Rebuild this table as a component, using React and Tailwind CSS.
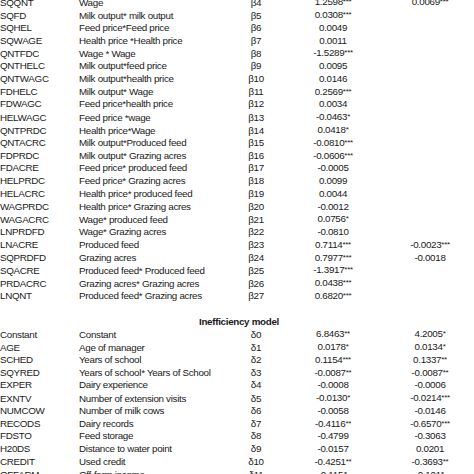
import React from 'react';

const rows = [
  ['SQQNT', 'Wage', 'β4', '1.2598', '***', '0.0069', '***'],
  ['SQFD', 'Milk output* milk output', 'β5', '0.0308', '***'],
  ['SQHEL', 'Feed price*Feed price', 'β6', '0.0049', ''],
  ['SQWAGE', 'Health price *Health price', 'β7', '0.0011', ''],
  ['QNTFDC', 'Wage * Wage', 'β8', '-1.5289', '***'],
  ['QNTHELC', 'Milk output*feed price', 'β9', '0.0095', ''],
  ['QNTWAGC', 'Milk output*health price', 'β10', '0.0146', ''],
  ['FDHELC', 'Milk output* Wage', 'β11', '0.2569', '***'],
  ['FDWAGC', 'Feed price*health price', 'β12', '0.0034', ''],
  ['HELWAGC', 'Feed price *wage', 'β13', '-0.0463', '*'],
  ['QNTPRDC', 'Health price*Wage', 'β14', '0.0418', '*'],
  ['QNTACRC', 'Milk output*Produced feed', 'β15', '-0.0810', '***'],
  ['FDPRDC', 'Milk output* Grazing acres', 'β16', '-0.0606', '***'],
  ['FDACRE', 'Feed price* produced feed', 'β17', '-0.0005', ''],
  ['HELPRDC', 'Feed price* Grazing acres', 'β18', '0.0099', ''],
  ['HELACRC', 'Health price* produced feed', 'β19', '0.0044', ''],
  ['WAGPRDC', 'Health price* Grazing acres', 'β20', '-0.0012', ''],
  ['WAGACRC', 'Wage* produced feed', 'β21', '0.0756', '*'],
  ['LNPRDFD', 'Wage* Grazing acres', 'β22', '-0.0810', ''],
  ['LNACRE', 'Produced feed', 'β23', '0.7114', '***', '-0.0023', '***'],
  ['SQPRDFD', 'Grazing acres', 'β24', '0.7977', '***', '-0.0018', ''],
  ['SQACRE', 'Produced feed* Produced feed', 'β25', '-1.3917', '***'],
  ['PRDACRC', 'Grazing acres* Grazing acres', 'β26', '0.0438', '***'],
  ['LNQNT', 'Produced feed* Grazing acres', 'β27', '0.6820', '***'],
];

const ineff = [
  ['Constant', 'Constant', 'δ0', '6.8463', '**', '4.2005', '*'],
  ['AGE', 'Age of manager', 'δ1', '0.0178', '*', '0.0134', '*'],
  ['SCHED', 'Years of school', 'δ2', '0.1154', '***', '0.1337', '**'],
  ['SQYRED', 'Years of school* Years of School', 'δ3', '-0.0087', '**', '-0.0087', '**'],
  ['EXPER', 'Dairy experience', 'δ4', '-0.0008', '', '-0.0006', ''],
  ['EXNTV', 'Number of extension visits', 'δ5', '-0.0130', '*', '-0.0214', '***'],
  ['NUMCOW', 'Number of milk cows', 'δ6', '-0.0058', '', '-0.0146', ''],
  ['RECODS', 'Dairy records', 'δ7', '-0.4116', '**', '-0.6570', '***'],
  ['FDSTO', 'Feed storage', 'δ8', '-0.4799', '', '-0.3063', ''],
  ['H20DS', 'Distance to water point', 'δ9', '-0.0157', '', '0.0201', ''],
  ['CREDIT', 'Used credit', 'δ10', '-0.4251', '**', '-0.3693', '**'],
  ['OFFARM', 'Off-farm income', 'δ11', '-0.1151', '', '-0.1011', ''],
];

const Val = ({ v, s }) =>
  v ? (
    <span>
      {v}
      {s && <span className="relative -top-[1px] text-[8px]">{s}</span>}
    </span>
  ) : null;

const Row = ({ r }) => (
  <div className="grid h-[12.77px] grid-cols-[79px_143px_68px_86px_108px] items-center whitespace-nowrap leading-[12.77px]">
    <div>{r[0]}</div>
    <div>{r[1]}</div>
    <div className="text-center">{r[2]}</div>
    <div className="text-center">
      <Val v={r[3]} s={r[4]} />
    </div>
    <div className="text-center">
      <Val v={r[5]} s={r[6]} />
    </div>
  </div>
);

export default function App() {
  return (
    <div
      className="h-[474px] w-[474px] overflow-hidden bg-white text-[9.8px] tracking-[-0.3px] text-[#1a1a1a]"
      style={{ fontFamily: '"Liberation Sans", Arial, sans-serif' }}
    >
      <div className="-mt-[3.65px] w-[484px]">
        {rows.map((r) => (
          <Row key={r[0]} r={r} />
        ))}
        <div className="h-[12.77px]" />
        <div className="h-[12.77px] w-[474px] pl-[4px] text-center font-bold leading-[12.77px]">
          Inefficiency model
        </div>
        {ineff.map((r) => (
          <Row key={r[0]} r={r} />
        ))}
      </div>
    </div>
  );
}
